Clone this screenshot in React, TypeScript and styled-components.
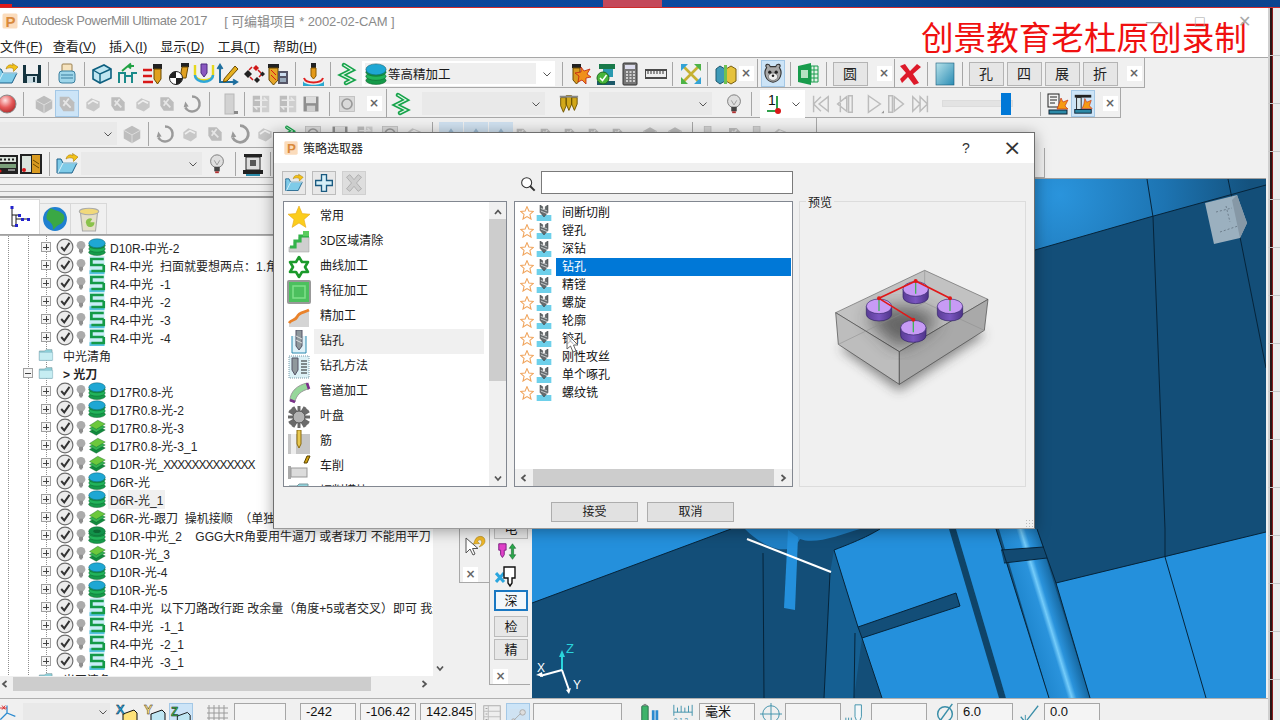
import React, { ReactNode } from 'react';
import styled, { createGlobalStyle } from 'styled-components';

const Global = createGlobalStyle`
  html, body { margin: 0; padding: 0; width: 1280px; height: 720px; overflow: hidden; background: #f0f0f0; }
  * { box-sizing: border-box; }
  body { font-family: "Liberation Sans", "Noto Sans CJK SC", sans-serif; font-size: 12px; color: #1a1a1a; }
  #root { width: 1280px; height: 720px; }
`;

/* ---------- icon drawings ---------- */
const gy = '#bdbdbd';
const gd = '#9a9a9a';
const paths: Record<string, ReactNode> = {
  folder: <><path d="M2 9V21H17L22 11H8L6 7H2Z" fill="#7fcbe8" stroke="#1c5f88" /><path d="M3 21L8 11H22" fill="none" stroke="#d8f2fb" /><path d="M11 7C12 3 15 2 18 3.5L17.5 1.5L23 5L18.5 9.5L18.3 6.5C16 5.5 13 5.5 11 7Z" fill="#f4c216" stroke="#a67c0c" strokeWidth=".6" /></>,
  save: <><rect x="3" y="3" width="18" height="18" fill="#15343f" /><rect x="6" y="3" width="12" height="9" fill="#f1f1f1" /><rect x="7" y="14" width="10" height="7" fill="#c9dbe2" /><rect x="13" y="15" width="2" height="5" fill="#15343f" /></>,
  printer: <><rect x="7" y="2" width="10" height="8" rx="1" fill="#f6e3be" stroke="#9a8050" /><rect x="4" y="9" width="16" height="12" rx="3" fill="#9fd6ea" stroke="#3a7f9f" /><path d="M6 13H18M6 16H18" stroke="#3a7f9f" /></>,
  box: <><path d="M3 8L14 3L21 7V16L10 21L3 17Z" fill="#bfe6f2" stroke="#0d5f7f" strokeWidth="1.6" /><path d="M3 8L10 12L21 7M10 12V21" fill="none" stroke="#0d5f7f" strokeWidth="1.4" /></>,
  fork: <><path d="M3 21V11H9V21M9 14H16V21M16 21V11H21" fill="none" stroke="#1a8a8a" strokeWidth="2" /><path d="M6 9L12 4H18M12 4L15 1.5M12 4L15 6.5" fill="none" stroke="#21a244" strokeWidth="2" /></>,
  endRed: <><rect x="12" y="2" width="9" height="5" fill="#222" /><path d="M13 7H20V17L16.5 22L13 17Z" fill="#e0a020" stroke="#6b4a00" /><path d="M2 8H11M2 14H11M2 20H12" stroke="#d81818" strokeWidth="2.4" /></>,
  ball: <><rect x="14" y="1" width="8" height="4" fill="#222" /><path d="M15 5H21L19 16H13Z" fill="#e0a020" stroke="#6b4a00" /><circle cx="9" cy="16" r="6.5" fill="#fff" stroke="#222" /><path d="M9 9.5A6.5 6.5 0 0 0 2.5 16H9ZM9 16V22.5A6.5 6.5 0 0 0 15.5 16Z" fill="#222" /></>,
  uTool: <><path d="M3 3V13C3 20 21 20 21 13V3" fill="none" stroke="#e6d81c" strokeWidth="2.4" /><path d="M3 13C3 22 21 22 21 13" fill="none" stroke="#2ea7d8" strokeWidth="2.4" /><path d="M9 2H15V11L12 15L9 11Z" fill="#8a58c0" stroke="#4c2a80" /></>,
  pencil: <><path d="M4 4V20H20" fill="none" stroke="#1e6e9e" strokeWidth="2" /><path d="M1.5 7L4 3L6.5 7M17 17.5L21 20L17 22.5" fill="none" stroke="#1e6e9e" strokeWidth="2" /><path d="M8 17L19 4L22 7L11 19L7.5 20Z" fill="#e6b020" stroke="#6b4a00" /></>,
  diamonds: <><path d="M3 12L7 8L11 12L7 16Z" fill="#222" /><path d="M12 6L15 3L18 6L15 9Z" fill="#d01818" /><path d="M13 18L16 15L19 18L16 21Z" fill="#222" /><path d="M8 8L11 5M9 15L12 18M17 8L20 11M18 15L21 12" stroke="#d01818" strokeWidth="1.5" /><path d="M19 12L21.5 9.5L24 12L21.5 14.5Z" fill="#222" /></>,
  calcTool: <><rect x="2" y="2" width="11" height="4" fill="#222" /><path d="M3 6H12V18L7.5 23L3 18Z" fill="#e6a628" stroke="#6b4a00" /><path d="M5 8L10 13M5 13L10 18" stroke="#d81818" /><rect x="12" y="9" width="10" height="13" fill="#556" /><rect x="14" y="11" width="6" height="3" fill="#cde" /><rect x="14" y="16" width="6" height="4" fill="#9ab" /></>,
  dish: <><rect x="10" y="1" width="5" height="5" fill="#222" /><path d="M10 6H15V14L12.5 17L10 14Z" fill="#e49a18" stroke="#8a5a00" /><path d="M3 16C5 22 20 22 22 16" fill="none" stroke="#e02020" strokeWidth="2" /><path d="M2 19C4 24 21 24 23 19V24H2Z" fill="#2aa8cf" /></>,
  zigzag: <><g fill="none" strokeLinecap="round"><path d="M9 3L17 8L7 13L17 18L11 21" stroke="#16a34a" strokeWidth="4.4" /><path d="M9 3L17 8L7 13L17 18L11 21" stroke="#e9f8ee" strokeWidth="1.1" /></g></>,
  stack: <><ellipse cx="12" cy="19" rx="11" ry="4.4" fill="#159a49" stroke="#0b5f2c" strokeWidth=".6" /><ellipse cx="12" cy="14.5" rx="11" ry="4.4" fill="#22b45a" stroke="#0b5f2c" strokeWidth=".6" /><ellipse cx="12" cy="10" rx="11" ry="4.4" fill="#159a49" stroke="#0b5f2c" strokeWidth=".6" /><ellipse cx="12" cy="7" rx="11" ry="6" fill="#1ea7d4" stroke="#0b5f6c" strokeWidth=".6" /></>,
  stackG: <><ellipse cx="12" cy="19" rx="11" ry="4.4" fill="#159a49" stroke="#0b5f2c" strokeWidth=".6" /><ellipse cx="12" cy="14.5" rx="11" ry="4.4" fill="#22b45a" stroke="#0b5f2c" strokeWidth=".6" /><ellipse cx="12" cy="10" rx="11" ry="4.4" fill="#159a49" stroke="#0b5f2c" strokeWidth=".6" /><ellipse cx="12" cy="7" rx="11" ry="6" fill="#12924a" stroke="#0b5f2c" strokeWidth=".6" /><ellipse cx="12" cy="7" rx="5" ry="2.4" fill="#0c6a34" /></>,
  zig: <><rect x="2" y="0" width="20" height="24" fill="#c9edf7" /><path d="M2 19H22V24H2Z" fill="#57c2e0" /><path d="M21 4H4.5V12H21M21 12V20H4.5" fill="none" stroke="#149a47" strokeWidth="3.6" /></>,
  layers: <><path d="M2 18L13 11L23 16L11 23Z" fill="#128a3e" stroke="#0a5a28" strokeWidth=".5" /><path d="M2 14L13 7L23 12L11 19Z" fill="#33b452" stroke="#0a5a28" strokeWidth=".5" /><path d="M2 10L13 3L23 8L11 15Z" fill="#6cc83c" stroke="#0a5a28" strokeWidth=".5" /></>,
  check: <><circle cx="12" cy="12" r="10.5" fill="#ececec" stroke="#6e6e6e" strokeWidth="1.6" /><path d="M7 12L11 16.5L18 6.5" fill="none" stroke="#333" strokeWidth="2.6" /></>,
  bulb: <><circle cx="12" cy="9" r="7.5" fill="#ababab" /><rect x="8.5" y="15" width="7" height="6" fill="#8f8f8f" /><rect x="10" y="21" width="4" height="2" fill="#777" /></>,
  bulbOn: <><circle cx="12" cy="9" r="7" fill="#dfdfdf" stroke="#777" /><path d="M9 8L12 13L15 8" fill="none" stroke="#999" /><rect x="9" y="15" width="6" height="5" fill="#444" /><rect x="10" y="20" width="4" height="2" fill="#b03030" /></>,
  folderT: <><path d="M2 6H10L12 4H21V20H2Z" fill="#8fd3dc" stroke="#7a9aa0" /><path d="M2 8H22V20H2Z" fill="#c6edf2" stroke="#7ab" strokeWidth=".6" /></>,
  ruler: <><rect x="1" y="7" width="22" height="10" fill="#4a4a4a" /><rect x="2" y="9" width="20" height="6" fill="#eee" /><path d="M4 9V12M7 9V12M10 9V12M13 9V12M16 9V12M19 9V12" stroke="#333" /></>,
  burst: <><rect x="3" y="2" width="9" height="4" fill="#222" /><path d="M4 6H11V18L7.5 22L4 18Z" fill="#d89a20" stroke="#6b4a00" /><path d="M12 5L15 9L21 7L18 12L22 15L17 16L17 22L13 18L9 20L10 14L6 11L12 10Z" fill="#f0901a" stroke="#c02010" strokeWidth=".8" /></>,
  checkTool: <><rect x="5" y="2" width="16" height="5" fill="#197a4a" /><rect x="9" y="7" width="10" height="8" fill="#2a9ab0" /><rect x="3" y="19" width="18" height="4" fill="#1d5a6a" /><circle cx="9" cy="16" r="6" fill="#47b53a" stroke="#206a20" /><path d="M6 16L8.5 18.5L12.5 13" fill="none" stroke="#fff" strokeWidth="1.5" /></>,
  calc: <><rect x="5" y="1" width="14" height="22" rx="1" fill="#777" stroke="#333" /><rect x="7" y="3" width="10" height="4" fill="#dde" /><path d="M8 10H10M11.5 10H13.5M15 10H17M8 13H10M11.5 13H13.5M15 13H17M8 16H10M11.5 16H13.5M15 16H17M8 19H10M11.5 19H13.5M15 19H17" stroke="#eee" strokeWidth="1.6" /></>,
  expand: <><path d="M4 4L20 20M20 4L4 20" stroke="#c6b132" strokeWidth="2.6" /><path d="M2 9V2H9L6 5ZM22 15V22H15L18 19Z" fill="#34a3d6" /><path d="M15 2H22V9L19 6ZM9 22H2V15L5 18Z" fill="#4db346" /></>,
  blocks: <><path d="M2 7L6 4L11 7V19L6 22L2 19Z" fill="#3f9ab8" stroke="#1e5a70" /><path d="M12 7L17 4L22 7V19L17 22L12 19Z" fill="#e6c23c" stroke="#7a6010" /><rect x="10" y="3" width="3" height="19" fill="#6fc254" /></>,
  bear: <><path d="M5 5C2 1 8 0 9 4H15C16 0 22 1 19 5C23 11 20 20 12 21C4 20 1 11 5 5Z" fill="#a8a8a8" stroke="#333" strokeWidth="1.2" /><ellipse cx="12" cy="15" rx="5" ry="4" fill="#eee" stroke="#555" strokeWidth=".6" /><circle cx="8.5" cy="10" r="1.8" fill="#222" /><circle cx="15.5" cy="10" r="1.8" fill="#222" /><circle cx="12" cy="14" r="1.4" fill="#222" /></>,
  greenDoc: <><path d="M2 4L15 1V23L2 20Z" fill="#189c4c" /><path d="M15 4H22V20H15Z" fill="#e3f3e8" stroke="#189c4c" /><path d="M15 8H22M15 12H22M15 16H22M18 4V20" stroke="#189c4c" /><rect x="5" y="8" width="7" height="8" fill="#b4e2c2" /></>,
  redX: <><path d="M2 4L7 2L12 9L19 2L23 5L15 12L21 21L16 23L10 15L4 21L2 17L8 11Z" fill="#dd1a2a" /></>,
  cyanSq: <><defs><linearGradient id="cg" x1="0" y1="0" x2="1" y2="1"><stop offset="0" stopColor="#b7e2ea" /><stop offset="1" stopColor="#2a8cb4" /></linearGradient></defs><rect x="3" y="1" width="18" height="22" fill="url(#cg)" stroke="#1a5a7a" strokeWidth=".6" /></>,
  ballRed: <><defs><radialGradient id="rb" cx=".4" cy=".3" r=".8"><stop offset="0" stopColor="#ffe2e2" /><stop offset=".5" stopColor="#e65a5a" /><stop offset="1" stopColor="#a32222" /></radialGradient></defs><circle cx="12" cy="12" r="9" fill="url(#rb)" stroke="#888" /></>,
  gCube: <><path d="M3 8L12 3L21 8V17L12 22L3 17Z" fill={gy} /><path d="M3 8L12 13L21 8M12 13V22" fill="none" stroke="#dedede" /></>,
  gCut: <><path d="M4 4H14L20 10V20H8L4 14Z" fill={gy} /><path d="M8 8L16 16M14 6L8 14" stroke="#e6e6e6" strokeWidth="2" /></>,
  gWave: <><path d="M4 10L10 5L20 9V16L13 21L4 17Z" fill="#c7c7c7" /><path d="M6 12L12 8L18 11" fill="none" stroke="#eee" strokeWidth="2" /></>,
  gLoop: <><path d="M12 3A9 9 0 1 1 4 16" fill="none" stroke={gd} strokeWidth="3" /><path d="M4 9L8 15L2 16Z" fill={gd} /></>,
  gBar: <><rect x="7" y="2" width="9" height="20" fill="#d2d2d2" stroke="#b8b8b8" /><rect x="16" y="19" width="4" height="3" fill="#888" /></>,
  gPair: <><rect x="3" y="3" width="8" height="18" fill={gy} /><rect x="13" y="3" width="8" height="18" fill="#cfcfcf" /><path d="M5 8H18L15 5M18 15H5L8 18" fill="none" stroke="#e9e9e9" strokeWidth="1.6" /></>,
  gSave: <><rect x="3" y="3" width="18" height="18" fill="#8f8f8f" /><rect x="6" y="3" width="12" height="8" fill="#ddd" /><rect x="7" y="14" width="10" height="7" fill="#cfcfcf" /></>,
  gCircle: <><rect x="3" y="3" width="18" height="18" fill="#d9d9d9" stroke="#bbb" /><circle cx="12" cy="12" r="6" fill="none" stroke="#999" strokeWidth="2" /></>,
  gold: <><path d="M4 5H10V14L7 21L4 14ZM10 3H16V12L13 19L10 12ZM16 5H22V12L19 19L16 12Z" fill="#d2a81a" stroke="#6b5200" /><rect x="3" y="3" width="20" height="2" fill="#888" /></>,
  axis: <><path d="M14 4V18" stroke="#2fa04a" strokeWidth="2" /><path d="M4 19H14" stroke="#2fa04a" strokeWidth="2" /><circle cx="15" cy="19" r="3" fill="#d81818" /><text x="5" y="13" fontSize="14" fill="#111" fontFamily="Liberation Sans">1</text></>,
  first: <><path d="M5 3V21M21 4L11 12L21 20ZM13 4L5 12L13 20" fill="none" stroke="#bcbcbc" strokeWidth="1.6" /></>,
  prev: <><path d="M8 3V21M21 3V21H17V3ZM15 4L5 12L15 20Z" fill="none" stroke="#bcbcbc" strokeWidth="1.6" /></>,
  play: <><path d="M7 3L20 12L7 21Z" fill="none" stroke="#bcbcbc" strokeWidth="1.6" /><path d="M21 22H24V19Z" fill="#999" /></>,
  next: <><path d="M3 3V21H7V3ZM9 4L19 12L9 20Z" fill="none" stroke="#bcbcbc" strokeWidth="1.6" /></>,
  last: <><path d="M3 4L11 12L3 20ZM11 4L19 12L11 20ZM19 3V21" fill="none" stroke="#bcbcbc" strokeWidth="1.6" /></>,
  machA: <><rect x="2" y="2" width="11" height="13" fill="#f3f3f3" stroke="#222" /><path d="M4 5H11M4 8H11M4 11H9" stroke="#222" /><rect x="3" y="18" width="18" height="4" fill="#2d8aa8" stroke="#123" /><path d="M15 6L17 10L22 8L19 14L22 17H11L13 12Z" fill="#f59a14" stroke="#c02010" strokeWidth=".6" /></>,
  machB: <><rect x="3" y="2" width="18" height="3" fill="#222" /><rect x="5" y="5" width="5" height="13" fill="#d8e8ee" stroke="#222" /><rect x="3" y="18" width="18" height="4" fill="#2d8aa8" stroke="#123" /><path d="M14 6L16 10L21 8L19 14L22 17H11L13 12Z" fill="#f59a14" stroke="#c02010" strokeWidth=".6" /></>,
  panelA: <><rect x="1" y="3" width="22" height="19" fill="#222" /><rect x="3" y="5" width="18" height="5" fill="#dbe4dc" /><path d="M5 7.5H7M9 7.5H11M13 7.5H15M17 7.5H19" stroke="#222" strokeWidth="2" /><rect x="3" y="12" width="18" height="4" fill="#7aa07a" /><circle cx="5" cy="19" r="1.6" fill="#d81818" /><path d="M13 18H20" stroke="#eee" /></>,
  panelB: <><rect x="1" y="2" width="22" height="20" fill="#222" /><rect x="3" y="4" width="9" height="16" fill="#dbe4dc" /><rect x="13" y="3" width="8" height="18" fill="#d89a20" /><path d="M14 8L20 12M14 12L20 16" stroke="#6b4a00" /><circle cx="5" cy="18" r="2" fill="#d81818" /></>,
  mach: <><rect x="3" y="2" width="18" height="3" fill="#222" /><rect x="5" y="5" width="14" height="13" fill="#dcdcdc" stroke="#222" /><rect x="9" y="8" width="6" height="6" fill="#555" /><rect x="2" y="18" width="20" height="4" fill="#222" /><rect x="5" y="22" width="14" height="2" fill="#2a8aa8" /></>,
  blueSel: <><rect x="0" y="0" width="24" height="24" fill="#cfe0ef" /><path d="M5 18L12 8L19 18" fill="none" stroke="#9ab8d0" strokeWidth="2" /></>,
  axX: <><path d="M8 11L19 7L22 10V21L11 23L8 20Z" fill="#ffe27a" stroke="#111" /><text x="1" y="11" fontSize="13" fontWeight="700" fill="#1a9ad6" stroke="#111" strokeWidth=".4" fontFamily="Liberation Sans">X</text></>,
  axY: <><path d="M8 11L19 7L22 10V21L11 23L8 20Z" fill="#bfe6f2" stroke="#111" /><text x="1" y="11" fontSize="13" fontWeight="700" fill="#ffe27a" stroke="#111" strokeWidth=".4" fontFamily="Liberation Sans">Y</text></>,
  axZ: <><path d="M8 11L19 7L22 10V21L11 23L8 20Z" fill="#bfe6f2" stroke="#111" /><text x="1" y="11" fontSize="13" fontWeight="700" fill="#39b54a" stroke="#111" strokeWidth=".4" fontFamily="Liberation Sans">Z</text></>,
  grid: <path d="M3 2V22M8 2V22M13 2V22M18 2V22M1 5H22M1 10H22M1 15H22M1 20H22" stroke="#9a9a9a" />,
  matrix: <><rect x="3" y="3" width="18" height="18" fill="#eee" stroke="#aaa" /><path d="M8 3V21M3 9H21M3 15H21" stroke="#bbb" /><path d="M5 6H7M5 12H7M5 18H7" stroke="#999" /></>,
  link: <><rect x="3" y="3" width="18" height="18" fill="#cfe2f2" /><circle cx="7" cy="16" r="2" fill="#ddd" stroke="#aaa" /><circle cx="17" cy="7" r="3" fill="#ddd" stroke="#aaa" /><path d="M8 15L15 8" stroke="#aaa" /></>,
  battery: <><rect x="3" y="3" width="7" height="19" rx="1" fill="#3db36a" stroke="#2a6a4a" /><rect x="5" y="1" width="3" height="2" fill="#888" /><path d="M14 8H17V22H14ZM18 8H21V22H18Z" fill="#2a8ad0" /></>,
  rulerB: <><path d="M2 2V14M22 2V14M2 10H22M6 5V10M10 3V10M14 5V10M18 3V10" fill="none" stroke="#3a8ea8" /><text x="2" y="22" fontSize="7" fill="#3a8ea8" fontFamily="Liberation Sans">0 1 2</text></>,
  cross: <><circle cx="12" cy="12" r="9" fill="none" stroke="#3a8ea8" /><path d="M12 0V24M0 12H24" stroke="#3a8ea8" /></>,
  toolB: <><path d="M12 2H19V15L17 20H14L12 15Z" fill="#f4f8fa" stroke="#3a8ea8" /><path d="M2 20V16M5 20V16M8 20V16M1 20H13" stroke="#3a8ea8" /></>,
  dia: <><circle cx="12" cy="12" r="8" fill="none" stroke="#3a8ea8" strokeWidth="1.6" /><path d="M4 23L20 1" stroke="#3a8ea8" strokeWidth="1.6" /></>,
  tickB: <><path d="M3 15L8 21L22 3" fill="none" stroke="#3a8ea8" strokeWidth="1.4" /><path d="M8 21V13" stroke="#3a8ea8" /></>,
  coord: <><path d="M12 12L4 20M12 12L22 16M12 12V3" stroke="#2a8ad0" strokeWidth="1.5" /><path d="M6 3L10 8M10 3L6 8M3 6H12" stroke="#d81818" /></>,
  bikeP: <><path d="M3 3H11V10H9V15L7 18L5 15V10H3Z" fill="#e040c8" stroke="#7a1a80" /><path d="M18 3L21.5 8H19.2V15H21.5L18 20L14.5 15H16.8V8H14.5Z" fill="#2aa84a" stroke="#145a2a" strokeWidth=".6" /></>,
  bikeX: <><path d="M1 9L9 18M9 9L1 18" stroke="#2ba6de" strokeWidth="3" /><path d="M9 3H20V14H17V19L15 22L13 19V14H9Z" fill="#fff" stroke="#111" strokeWidth="1.4" /></>,
  undoCur: <><path d="M3 5V20L7 16L10 22L12 21L9.5 15.5H15Z" fill="#fff" stroke="#555" /><path d="M12 7C14 2 22 2 22 8C22 11 19 13 16 14C18 12 19 10 18.6 8.5C18 6 15.5 6.5 14.6 8.5L16.5 10.5L10.5 11Z" fill="#f0b828" stroke="#a07a10" strokeWidth=".5" /></>,
  star: <><path d="M12 1L15.2 8.6L23 9.2L17 14.4L18.9 22.4L12 18L5.1 22.4L7 14.4L1 9.2L8.8 8.6Z" fill="#fff" stroke="#f0a45c" strokeWidth="1.8" /></>,
  starF: <><path d="M12 1L15.2 8.6L23 9.2L17 14.4L18.9 22.4L12 18L5.1 22.4L7 14.4L1 9.2L8.8 8.6Z" fill="#fbcd1d" stroke="#e8a817" strokeWidth=".6" /></>,
  endMill: <><path d="M1 15H23V24H1Z" fill="#6ed0ea" /><path d="M6 0V11L12 18L18 11V0L14 2.5V7H10V2.5Z" fill="#666c6e" stroke="#2a2e30" strokeWidth=".7" /><path d="M7 5L17 9M7 9L17 13" stroke="#d0d4d6" strokeWidth="1.3" /></>,
  steps: <><path d="M2 22V17H7V12H12V7H22V22Z" fill="#cfcfcf" stroke="#999" strokeWidth=".5" /><path d="M3 17H8V11H13V6H22" fill="none" stroke="#33b34a" strokeWidth="3.2" /><rect x="16" y="1" width="6" height="5" fill="#5bcc5f" /></>,
  flower: <><path d="M12 2L15 7L21 7L18 12L21 17L15 17L12 22L9 17L3 17L6 12L3 7L9 7Z" fill="#fff" stroke="#1b9a2b" strokeWidth="2.6" strokeLinejoin="round" /></>,
  greenSq: <><rect x="0" y="0" width="24" height="24" rx="2" fill="#999" /><rect x="2" y="2" width="20" height="20" fill="#4cc05e" /><rect x="6" y="6" width="12" height="12" fill="none" stroke="#7fe08a" strokeWidth="1.5" /></>,
  stairs: <><path d="M2 22V17L8 14L12 9L18 6H22V22Z" fill="#d4d4d4" /><path d="M2 18C5 14 8 16 10 12C12 7 16 8 22 5" fill="none" stroke="#e9822a" strokeWidth="2.8" /></>,
  drill: <><path d="M5 6V23H19V6" fill="#dff2f9" stroke="#2a8ab0" /><path d="M9 0H15V16L12 20L9 16Z" fill="#8f989c" stroke="#556" /><path d="M9 6L15 9M9 10L15 13" stroke="#ddd" /></>,
  drillL: <><rect x="2" y="1" width="20" height="22" fill="#dcf1f6" stroke="#7a9aa8" strokeDasharray="1 1" /><path d="M5 3H11V15L8 20L5 15Z" fill="#8f989c" stroke="#556" /><path d="M14 6H20M14 9H20M14 12H20M14 15H20M14 18H20" stroke="#222" /></>,
  pipe: <><path d="M3 21C3 11 11 5 20 3L22 9C15 10 9 15 8 22Z" fill="#96d79a" stroke="#9a9a9a" /><path d="M3 20L8 22" stroke="#7a2f8a" strokeWidth="2.6" /><path d="M20 3L22 9" stroke="#7a2f8a" strokeWidth="2.6" /></>,
  gear: <><g stroke="#6a6a6a" strokeWidth="3"><path d="M12 1V23M1 12H23M4 4L20 20M20 4L4 20M6 2L18 22M18 2L6 22M2 6L22 18M22 6L2 18" /></g><circle cx="12" cy="12" r="6" fill="#b3b3b3" stroke="#555" /></>,
  rib: <><rect x="1" y="4" width="22" height="20" fill="#c6c6c6" /><rect x="4" y="4" width="5" height="20" fill="#ededed" /><path d="M10 0H14V14L12 18L10 14Z" fill="#e8c850" stroke="#8a6a10" /></>,
  turn: <><rect x="1" y="11" width="3" height="13" fill="#aaa" /><rect x="4" y="13" width="16" height="9" fill="#dcdcdc" stroke="#999" /><path d="M17 8L20 1H23L20 8Z" fill="#d0a010" stroke="#5a4400" /></>,
  search: <><circle cx="10" cy="10" r="7.5" fill="#fff" stroke="#333" strokeWidth="1.6" /><path d="M15 15L22 22" stroke="#333" strokeWidth="3" /></>,
  plus: <><path d="M9 2H15V9H22V15H15V22H9V15H2V9H9Z" fill="#d7f0f8" stroke="#1a5a80" strokeWidth="1.6" /></>,
  cancel: <><path d="M3 5L7 2L12 8L17 2L21 5L15 12L21 19L17 22L12 16L7 22L3 19L9 12Z" fill="#cdcdcd" stroke="#aaa" /></>,
  logo: <><rect x="2" y="2" width="20" height="20" rx="2" fill="#fbdcbc" /><text x="6" y="20" fontSize="20" fontWeight="700" fill="#d98a3c" fontFamily="Liberation Sans">P</text></>,
  treeTab: <><path d="M4 2V21H9M4 10H11M8 10V19M8 14H14M14 14H20" fill="none" stroke="#1c1c1c" strokeWidth="1" /><rect x="2.5" y="1" width="3" height="3" fill="#2222cc" /><rect x="10" y="9" width="3" height="3" fill="#2222cc" /><rect x="13" y="13" width="3" height="3" fill="#2222cc" /><rect x="7" y="19" width="3" height="3" fill="#2222cc" /><rect x="19" y="13" width="3" height="3" fill="#2222cc" /></>,
  globe: <><circle cx="12" cy="12" r="11" fill="#1f7fd0" /><path d="M8 2C12 4 18 5 20 8C22 12 19 16 16 17C13 18 12 21 10 22C11 18 8 15 5 13C3 10 5 5 8 2Z" fill="#3aa845" /></>,
  bin: <><path d="M4 5H20L18 23H6Z" fill="#e5e0c8" stroke="#aaa" /><ellipse cx="12" cy="5" rx="9" ry="3" fill="#f1d97a" stroke="#aaa" /><path d="M9 15A4 4 0 0 1 15 12L13 15H17A4 4 0 0 1 10 18Z" fill="#8ac24a" /></>,
};

const IconSvg = styled.svg<{ $s: number }>`
  width: ${(p) => p.$s}px;
  height: ${(p) => p.$s}px;
  flex: none;
  display: block;
`;
const Ic = ({ n, s = 24 }: { n: string; s?: number }) => (
  <IconSvg $s={s} viewBox="0 0 24 24">{paths[n]}</IconSvg>
);

/* ---------- shell ---------- */
const Page = styled.div`
  width: 1280px;
  height: 720px;
  display: flex;
  flex-direction: column;
  position: relative;
  overflow: hidden;
`;
const TopStrip = styled.div`
  height: 8px;
  flex: none;
  border-bottom: 1px solid #d02a2a;
  background:
    linear-gradient(#e01818, #e01818) 0 4px / 12px 3px no-repeat,
    linear-gradient(#c4485a, #c4485a) 603px 0 / 59px 7px no-repeat,
    linear-gradient(90deg, #0a3f8f, #0b4aa0 60%, #0a3a80 80%, #0b4590);
`;
const Desk = styled.div`
  flex: 1;
  display: flex;
  min-height: 0;
`;
const Frame = styled.div`
  width: 1268px;
  flex: none;
  display: flex;
  flex-direction: column;
  background: #f0f0f0;
`;
const EdgeStrip = styled.div`
  flex: 1;
  background:
    repeating-linear-gradient(180deg, transparent 0 47px, #c8c8c8 47px 48px),
    linear-gradient(90deg, #cfcfcf 0 2px, #2a1414 2px 4px, #8a1c1c 4px 5px, #ececec 5px);
`;
const TitleBar = styled.div`
  height: 25px;
  flex: none;
  background: #fff;
  display: flex;
  align-items: center;
  padding-left: 1px;
  gap: 3px;
`;
const TitleMain = styled.span`
  font-size: 13px;
  color: #8a8a8a;
  white-space: pre;
  letter-spacing: -0.4px;
`;
const TitleProject = styled(TitleMain)`
  margin-left: 14px;
  letter-spacing: -0.1px;
`;
const Watermark = styled.div`
  position: absolute;
  left: 921px;
  top: 16px;
  font-family: "Noto Sans CJK SC", serif;
  font-size: 32.6px;
  line-height: 40px;
  color: #f01010;
  white-space: nowrap;
  font-weight: 400;
`;
const WinControls = styled.div`
  position: absolute;
  left: 1146px;
  top: 14px;
  display: flex;
  gap: 33px;
  color: #a8a8a8;
  font-size: 16px;
  line-height: 16px;
`;
const MenuBar = styled.div`
  height: 25px;
  flex: none;
  background: #fff;
  display: flex;
  align-items: center;
  gap: 13px;
  border-bottom: 1px solid #a8a8a8;
`;
const MenuItem = styled.span`
  font-size: 13px;
  color: #222;
  white-space: pre;
  & u { text-decoration: underline; }
  &:first-child { margin-right: -3px; }
`;

/* ---------- toolbars ---------- */
const Band = styled.div`
  height: 30px;
  flex: none;
  background: #f0f0f0;
  overflow: hidden;
`;
const Bar = styled.div<{ $w: number }>`
  width: ${(p) => p.$w}px;
  height: 30px;
  padding-top: 2px;
  display: flex;
  align-items: center;
  border-right: 1px solid #a8a8a8;
  border-bottom: 1px solid #a8a8a8;
`;
const Cell = styled.div<{ $ml: number; $w: number }>`
  margin-left: ${(p) => p.$ml}px;
  width: ${(p) => p.$w}px;
  flex: none;
  display: flex;
  align-items: center;
  justify-content: center;
`;
const SelBox = styled.div`
  width: 24px;
  height: 27px;
  background: #cce4f7;
  border: 1px solid #a4c8e6;
  display: flex;
  align-items: center;
  justify-content: center;
`;
const VSep = styled.div`
  width: 1px;
  height: 24px;
  background: #a6a6a6;
`;
const TallSep = styled(VSep)`
  height: 30px;
`;
const CloseBox = styled.div`
  width: 15px;
  height: 15px;
  background: #fff;
  color: #666;
  font: 700 12px/15px "DejaVu Sans", sans-serif;
  text-align: center;
`;
const TextBtn = styled.div`
  width: 100%;
  height: 24px;
  border: 1px solid #b4b4b4;
  background: #e6e6e6;
  font-size: 14px;
  line-height: 22px;
  text-align: center;
  color: #222;
`;
const ComboBox = styled.div`
  width: 100%;
  height: 23px;
  background: #e9e9e9;
  display: flex;
  align-items: center;
  justify-content: flex-end;
  padding-right: 4px;
`;
const ComboWide = styled.div`
  width: 100%;
  height: 25px;
  background: #fff;
  display: flex;
  align-items: center;
  padding-left: 3px;
  padding-right: 3px;
`;
const ComboInner = styled.div`
  flex: 1;
  height: 21px;
  background: #efefef;
  display: flex;
  align-items: center;
  gap: 1px;
  font-size: 12.5px;
`;
const Chevron = () => (
  <IconSvg $s={10} viewBox="0 0 10 10"><path d="M1.5 3.5L5 7L8.5 3.5" fill="none" stroke="#555" strokeWidth="1" /></IconSvg>
);
const AxisBox = styled.div`
  width: 100%;
  height: 28px;
  background: #fff;
  display: flex;
  align-items: center;
  padding-left: 3px;
  gap: 4px;
`;
const SliderTrack = styled.div`
  width: 100%;
  height: 7px;
  background: #e3e3e3;
  border: 1px solid #dcdcdc;
  display: flex;
  justify-content: flex-end;
  align-items: center;
  padding-right: 1px;
`;
const SliderThumb = styled.div`
  width: 10px;
  height: 22px;
  background: #0078d7;
  flex: none;
`;

type It = [number, number, ReactNode];
const ic = (x: number, n: string, s = 24): It => [x, s, <Ic n={n} s={s} />];
const sel = (x: number, n: string, s = 22): It => [x, 24, <SelBox><Ic n={n} s={s} /></SelBox>];
const sep = (x: number): It => [x, 1, <VSep />];
const div = (x: number): It => [x, 1, <TallSep />];
const cl = (x: number): It => [x, 15, <CloseBox>×</CloseBox>];
const tb = (x: number, t: string, w = 35): It => [x, w, <TextBtn>{t}</TextBtn>];
const combo = (a: number, b: number): It => [(a + b) / 2, b - a, <ComboBox><Chevron /></ComboBox>];

const flow = (items: It[]) => {
  let right = 0;
  return items.map(([x, w, node], i) => {
    const left = x - w / 2;
    const ml = left - right;
    right = left + w;
    return <Cell key={i} $ml={ml} $w={w}>{node}</Cell>;
  });
};

const row1: It[] = [
  ic(7, 'folder'), ic(32, 'save'), sep(48), ic(67, 'printer'), sep(84), ic(102, 'box'), ic(128, 'fork'), ic(153, 'endRed'), ic(179, 'ball'), ic(204, 'uTool'), ic(228, 'pencil'), ic(253, 'diamonds'), ic(278, 'calcTool'), sep(295), ic(313, 'dish'), sep(330), ic(347, 'zigzag'),
  [458.5, 193, <ComboWide><ComboInner><Ic n="stack" s={22} />等高精加工</ComboInner><Cell $ml={6} $w={10}><Chevron /></Cell></ComboWide>],
  sep(562), ic(581, 'burst'), ic(606, 'checkTool'), ic(630, 'calc'), ic(656, 'ruler'), sep(672), ic(691, 'expand'), sep(707), ic(726, 'blocks'), cl(746), div(757), sel(773, 'bear'), sep(790), ic(808, 'greenDoc'), sep(826), tb(850, '圆'), cl(884), div(894), ic(910, 'redX'), sep(927), ic(945, 'cyanSq'), sep(962), tb(986, '孔'), tb(1024, '四'), tb(1062, '展'), tb(1100, '折'), cl(1134),
];
const row2: It[] = [
  ic(7, 'ballRed'), sep(23), ic(44, 'gCube', 22), sel(67, 'gCut'), ic(93, 'gWave', 20), ic(118, 'gCut', 20), ic(143, 'gWave', 20), ic(167, 'gCut', 20), ic(192, 'gLoop', 20), sep(209), ic(230, 'gBar'), sep(244), ic(261, 'gPair', 22), ic(288, 'gPair', 22), ic(311, 'gSave', 20), sep(329), ic(347, 'gCircle', 20), cl(374), div(386), ic(401, 'zigzag'), combo(422, 545), ic(568, 'gold', 22), combo(589, 712), ic(734, 'bulbOn', 22), sep(751),
  [782.5, 45, <AxisBox><Ic n="axis" s={24} /><Chevron /></AxisBox>],
  ic(820, 'first', 22), ic(844, 'prev', 22), ic(873, 'play', 22), ic(897, 'next', 22), ic(921, 'last', 22),
  [977.5, 71, <SliderTrack><SliderThumb /></SliderTrack>],
  sep(1040), ic(1058, 'machA'), sel(1083, 'machB'), cl(1110),
];
const row3: It[] = [
  combo(0, 117), ic(132, 'gCube', 22), sep(148), ic(165, 'gLoop', 20), ic(190, 'gWave', 20), ic(215, 'gCut', 20), ic(240, 'gLoop', 22), ic(265, 'gWave', 20), ic(289, 'zigzag', 18), ic(313, 'gCircle', 20), ic(340, 'gSave', 20), ic(365, 'gPair', 20), ic(390, 'gCircle', 20), ic(414, 'gWave', 20), sep(432), ic(451, 'blueSel'), ic(476, 'blueSel'), ic(501, 'blueSel'), ic(522, 'gCut', 16), ic(546, 'gCut', 16), ic(570, 'gCut', 16), ic(594, 'gCut', 16), ic(618, 'gCut', 16), ic(650, 'gCube', 18), ic(675, 'gCube', 18), sep(692), ic(708, 'gBar', 18), ic(735, 'gCut', 18), ic(757, 'gBar', 18), ic(780, 'gWave', 18),
];
const row4: It[] = [
  ic(7, 'panelA'), ic(31, 'panelB'), sep(49), ic(67, 'folder'), combo(81, 202), ic(217, 'bulbOn', 22), sep(235), ic(253, 'mach'), sep(270),
];

/* ---------- work area ---------- */
const Work = styled.div`
  flex: 1;
  min-height: 0;
  display: flex;
`;
const LeftColumn = styled.div`
  width: 532px;
  flex: none;
  display: flex;
  flex-direction: column;
`;
const DockLines = styled.div`
  height: 20px;
  flex: none;
  border-bottom: 2px solid #9c9c9c;
  background: linear-gradient(#f0f0f0 0 6px, #b0b0b0 6px 7px, #f0f0f0 7px 13px, #b0b0b0 13px 14px, #f0f0f0 14px);
`;
const DockBody = styled.div`
  flex: 1;
  min-height: 0;
  display: flex;
`;
const TreePane = styled.div`
  width: 447px;
  flex: none;
  display: flex;
  flex-direction: column;
`;
const TabsRow = styled.div`
  height: 37px;
  flex: none;
  display: flex;
  align-items: flex-end;
  border-bottom: 1px solid #a0a0a0;
`;
const Tab = styled.div<{ $on?: boolean; $w: number }>`
  width: ${(p) => p.$w}px;
  height: ${(p) => (p.$on ? 35 : 31)}px;
  background: ${(p) => (p.$on ? '#fff' : '#f0f0f0')};
  border-right: 1px solid #d8d8d8;
  border-top: 1px solid #d8d8d8;
  display: flex;
  align-items: center;
  justify-content: center;
`;
const TreeRow2 = styled.div`
  height: 441px;
  flex: none;
  display: flex;
  border-top: 1px solid #b0b0b0;
`;
const Tree = styled.div`
  width: 433px;
  flex: none;
  overflow: hidden;
  padding-top: 2px;
  background:
    repeating-linear-gradient(180deg, #8e8e8e 0 1px, transparent 1px 2px) 8px 0 / 1px 100% no-repeat,
    repeating-linear-gradient(180deg, #8e8e8e 0 1px, transparent 1px 2px) 28px 0 / 1px 100% no-repeat,
    repeating-linear-gradient(180deg, #8e8e8e 0 1px, transparent 1px 2px) 46px 0 / 1px 100% no-repeat,
    #fff;
`;
const Row = styled.div<{ $pad: number }>`
  height: 18px;
  display: flex;
  align-items: center;
  padding-left: ${(p) => p.$pad}px;
  white-space: pre;
  color: #262626;
  font-size: 12px;
`;
const Expander = styled.span<{ $open?: boolean }>`
  width: 10px;
  height: 10px;
  flex: none;
  background:
    linear-gradient(#444, #444) center / 6px 1px no-repeat,
    ${(p) => (p.$open ? '' : 'linear-gradient(#444, #444) center / 1px 6px no-repeat,')}
    #f5f5f5;
  border: 1px solid #a0a0a0;
`;
const Check = styled.span`
  margin-left: 5px;
  display: flex;
`;
const PlainSlot = styled.span`
  display: flex;
`;
const RowText = styled.span<{ $hl?: boolean }>`
  margin-left: 2px;
  padding: 1px 2px;
  background: ${(p) => (p.$hl ? '#f0f0f0' : 'transparent')};
`;
const NarrowTail = styled.span`
  letter-spacing: -1px;
`;
const FolderName = styled.span<{ $bold?: boolean }>`
  margin-left: 9px;
  font-weight: ${(p) => (p.$bold ? 700 : 400)};
`;
const VScroll = styled.div`
  width: 14px;
  flex: none;
  background: #f0f0f0;
  display: flex;
  flex-direction: column;
  justify-content: flex-end;
  align-items: center;
  padding-bottom: 3px;
`;
const HScroll = styled.div`
  height: 15px;
  flex: none;
  width: 433px;
  background: #f0f0f0;
  display: flex;
  align-items: center;
  padding-right: 4px;
  gap: 3px;
`;
const HThumb = styled.div<{ $w: number }>`
  width: ${(p) => p.$w}px;
  height: 14px;
  background: #cdcdcd;
  flex: none;
`;
const HFill = styled.div`
  flex: 1;
`;
const Arrow = ({ d }: { d: 'u' | 'd' | 'l' | 'r' }) => {
  const p = { u: 'M2 7L5 3.5L8 7', d: 'M2 3.5L5 7L8 3.5', l: 'M6.5 2L3 5L6.5 8', r: 'M3.5 2L7 5L3.5 8' }[d];
  return <IconSvg $s={10} viewBox="0 0 10 10"><path d={p} fill="none" stroke="#555" strokeWidth="1.7" /></IconSvg>;
};
const Strip = styled.div<{ $h: number; $w: number }>`
  width: ${(p) => p.$w}px;
  height: ${(p) => p.$h}px;
  flex: none;
  border-left: 1px solid #a8a8a8;
  border-bottom: 1px solid #a8a8a8;
  display: flex;
  flex-direction: column;
  justify-content: flex-end;
  align-items: center;
`;
const StripGap = styled.div<{ $w: number }>`
  width: ${(p) => p.$w}px;
  flex: none;
`;
const SideBtn = styled.div<{ $on?: boolean; $mt: number }>`
  width: 34px;
  height: 21px;
  margin-top: ${(p) => p.$mt}px;
  margin-left: 2px;
  flex: none;
  border: ${(p) => (p.$on ? '2px solid #1a78c2' : '1px solid #bcbcbc')};
  background: ${(p) => (p.$on ? '#f2f7fb' : '#e7e7e7')};
  font-size: 13px;
  line-height: ${(p) => (p.$on ? 17 : 19)}px;
  text-align: center;
`;
const StripIcon = styled.div<{ $mt: number; $ml: number }>`
  margin-top: ${(p) => p.$mt}px;
  margin-left: ${(p) => p.$ml}px;
  display: flex;
`;
const StripClose = styled.div<{ $mt: number; $mr: number }>`
  margin-top: ${(p) => p.$mt}px;
  margin-right: ${(p) => p.$mr}px;
`;

const ViewWrap = styled.div`
  width: 734px;
  flex: none;
  display: flex;
  border-top: 1px solid #a0a0a0;
`;
const ViewSvg = styled.svg`
  display: block;
  width: 734px;
  height: 519px;
`;

/* ---------- status bar ---------- */
const StatusBar = styled.div`
  height: 22px;
  flex: none;
  display: flex;
  align-items: flex-start;
  padding-top: 4px;
  border-top: 1px solid #b0b0b0;
  overflow: hidden;
`;
const StatusField = styled.div`
  width: 100%;
  height: 20px;
  border: 1px solid #a6a6a6;
  background: #f4f4f4;
  font-size: 13px;
  line-height: 16px;
  padding-left: 5px;
  color: #111;
  white-space: nowrap;
`;
const StatusCombo = styled.div`
  width: 100%;
  height: 18px;
  background: #e9e9e9;
  display: flex;
  align-items: center;
  justify-content: flex-end;
  padding-right: 2px;
`;

/* ---------- dialog ---------- */
const Dialog = styled.div`
  position: absolute;
  left: 273px;
  top: 132px;
  width: 762px;
  height: 397px;
  background: #f0f0f0;
  border: 1px solid #6f6f6f;
  border-bottom-color: #9a9a9a;
  box-shadow: 0 2px 14px rgba(0, 0, 0, 0.35);
  display: flex;
  flex-direction: column;
`;
const DlgTitle = styled.div`
  height: 30px;
  flex: none;
  background: #fff;
  display: flex;
  align-items: center;
  padding-left: 9px;
  padding-bottom: 1px;
  gap: 4px;
  font-size: 12px;
`;
const DlgTitleFill = styled.span`
  flex: 1;
`;
const DlgHelp = styled.span`
  font-size: 14px;
  color: #333;
  width: 37px;
`;
const DlgClose = styled.span`
  font-size: 22px;
  line-height: 22px;
  color: #333;
  width: 31px;
  font-family: "DejaVu Sans", sans-serif;
`;
const DlgBody = styled.div`
  flex: 1;
  padding: 8px 8px 0 9px;
  display: grid;
  grid-template-columns: 224px 279px 227px;
  grid-template-rows: 24px 286px auto;
  column-gap: 7px;
  row-gap: 6px;
`;
const DlgTools = styled.div`
  display: flex;
  gap: 6px;
  margin-left: -1px;
`;
const ToolBtn = styled.div<{ $off?: boolean }>`
  width: 24px;
  height: 24px;
  background: ${(p) => (p.$off ? '#dedede' : '#e8e8e8')};
  border: 1px solid ${(p) => (p.$off ? '#d0d0d0' : '#bcbcbc')};
  display: flex;
  align-items: center;
  justify-content: center;
`;
const SearchRow = styled.div`
  display: flex;
  align-items: flex-start;
  gap: 5px;
  padding-left: 6px;
`;
const SearchIconSlot = styled.div`
  padding-top: 5px;
`;
const SearchInput = styled.div`
  flex: 1;
  height: 23px;
  background: #fff;
  border: 1px solid #7a7a7a;
`;
const ListBox = styled.div`
  background: #fff;
  border: 1px solid #828790;
  display: flex;
  overflow: hidden;
  min-height: 0;
`;
const CatItems = styled.div`
  flex: 1;
  padding-top: 2px;
  overflow: hidden;
`;
const CatItem = styled.div`
  height: 25px;
  display: flex;
  align-items: center;
`;
const CatIcon = styled.div`
  width: 30px;
  padding-left: 3px;
  flex: none;
  display: flex;
`;
const CatLabel = styled.div<{ $on?: boolean }>`
  flex: 1;
  height: 25px;
  line-height: 25px;
  margin-right: 5px;
  padding-left: 6px;
  font-size: 12px;
  background: ${(p) => (p.$on ? '#f0f0f0' : 'transparent')};
`;
const VBar = styled.div`
  width: 17px;
  flex: none;
  background: #f0f0f0;
  display: flex;
  flex-direction: column;
  align-items: center;
  padding-top: 5px;
`;
const VThumb = styled.div`
  width: 100%;
  height: 162px;
  margin-top: 2px;
  background: #cdcdcd;
  flex: none;
`;
const VBarFill = styled.div`
  flex: 1;
`;
const VBarEnd = styled.div`
  padding-bottom: 3px;
`;
const MidList = styled(ListBox)`
  flex-direction: column;
`;
const MidItems = styled.div`
  flex: 1;
  padding-top: 2px;
`;
const MidItem = styled.div`
  height: 18px;
  display: flex;
  align-items: center;
  padding-left: 5px;
`;
const StarSlot = styled.span`
  display: flex;
  margin-right: 2px;
`;
const MidLabel = styled.span<{ $on?: boolean }>`
  flex: 1;
  margin-left: 4px;
  margin-right: 1px;
  height: 18px;
  line-height: 18px;
  padding-left: 6px;
  font-size: 12px;
  background: ${(p) => (p.$on ? '#0078d7' : 'transparent')};
  color: ${(p) => (p.$on ? '#fff' : '#111')};
`;
const HBar = styled.div`
  height: 17px;
  flex: none;
  background: #f0f0f0;
  display: flex;
  align-items: center;
  padding: 0 4px;
  gap: 4px;
`;
const HBarThumb = styled.div`
  flex: 1;
  height: 17px;
  background: #cdcdcd;
`;
const PreviewBox = styled.div`
  border: 1px solid #dcdcdc;
  position: relative;
  margin-left: -1px;
  margin-right: 1px;
`;
const PreviewLabel = styled.span`
  position: absolute;
  left: 6px;
  top: -6px;
  padding: 0 2px;
  background: #f0f0f0;
  font-size: 12px;
  line-height: 14px;
`;
const PreviewSvg = styled.svg`
  display: block;
  width: 226px;
  height: 209px;
`;
const DlgFooter = styled.div`
  grid-column: 1 / 4;
  display: flex;
  gap: 9px;
  padding-left: 268px;
  padding-top: 9px;
`;
const PushBtn = styled.div`
  width: 87px;
  height: 20px;
  background: #e1e1e1;
  border: 1px solid #adadad;
  text-align: center;
  line-height: 18px;
  font-size: 12px;
`;
const Grip = styled.div`
  position: absolute;
  right: 1px;
  bottom: 1px;
  width: 8px;
  height: 8px;
  background:
    radial-gradient(circle, #bbb 0 1px, transparent 1px) 0 0 / 3px 3px;
`;
const Cursor = styled.svg`
  position: absolute;
  left: 566px;
  top: 333px;
  width: 13px;
  height: 20px;
`;

/* ---------- data ---------- */
type T = { t: string; i: string; hl?: boolean; tail?: string };
const treeA: T[] = [
  { t: 'D10R-中光-2', i: 'stack' },
  { t: 'R4-中光  扫面就要想两点：1.角度2.行距要合适', i: 'zig' },
  { t: 'R4-中光  -1', i: 'zig' },
  { t: 'R4-中光  -2', i: 'zig' },
  { t: 'R4-中光  -3', i: 'zig' },
  { t: 'R4-中光  -4', i: 'zig' },
];
const treeB: T[] = [
  { t: 'D17R0.8-光', i: 'stack' },
  { t: 'D17R0.8-光-2', i: 'stack' },
  { t: 'D17R0.8-光-3', i: 'layers' },
  { t: 'D17R0.8-光-3_1', i: 'layers' },
  { t: 'D10R-光_', tail: 'XXXXXXXXXXXXX', i: 'layers' },
  { t: 'D6R-光', i: 'stack' },
  { t: 'D6R-光_1', i: 'stack', hl: true },
  { t: 'D6R-光-跟刀  操机接顺  （单独', i: 'layers' },
  { t: 'D10R-中光_2    GGG大R角要用牛逼刀 或者球刀 不能用平刀', i: 'stackG' },
  { t: 'D10R-光_3', i: 'layers' },
  { t: 'D10R-光-4', i: 'stack' },
  { t: 'D10R-光-5', i: 'stack' },
  { t: 'R4-中光  以下刀路改行距 改余量（角度+5或者交叉）即可 我这里用的是', i: 'zig' },
  { t: 'R4-中光  -1_1', i: 'zig' },
  { t: 'R4-中光  -2_1', i: 'zig' },
  { t: 'R4-中光  -3_1', i: 'zig' },
];
const cats: [string, string][] = [
  ['starF', '常用'], ['steps', '3D区域清除'], ['flower', '曲线加工'], ['greenSq', '特征加工'], ['stairs', '精加工'], ['drill', '钻孔'], ['drillL', '钻孔方法'], ['pipe', '管道加工'], ['gear', '叶盘'], ['rib', '筋'], ['turn', '车削'], ['folderT', '切削模块'],
];
const mids = ['间断切削', '镗孔', '深钻', '钻孔', '精镗', '螺旋', '轮廓', '铰孔', '刚性攻丝', '单个啄孔', '螺纹铣'];

const ItemRow = ({ t, i, hl, tail }: T) => (
  <Row $pad={41}>
    <Expander />
    <Check><Ic n="check" s={18} /></Check>
    <PlainSlot><Ic n="bulb" s={14} /></PlainSlot>
    <PlainSlot><Ic n={i} s={18} /></PlainSlot>
    <RowText $hl={hl}>{t}{tail && <NarrowTail>{tail}</NarrowTail>}</RowText>
  </Row>
);

const Preview = () => (
  <PreviewSvg viewBox="3 33 678 627">
    <defs>
      <filter id="sh" x="-30%" y="-30%" width="160%" height="160%"><feGaussianBlur stdDeviation="18" /></filter>
      <filter id="sh2" x="-30%" y="-30%" width="160%" height="160%"><feGaussianBlur stdDeviation="26" /></filter>
      <linearGradient id="cyl" x1="0" x2="1"><stop offset="0" stopColor="#5a3d96" /><stop offset=".5" stopColor="#7a55c0" /><stop offset="1" stopColor="#4e3488" /></linearGradient>
    </defs>
    <path d="M120 470L300 600L560 430L420 370Z" fill="#333" opacity=".55" filter="url(#sh)" />
    <path d="M110 365L377 238L567 325L301 482Z" fill="#c2c2c2" stroke="#666" strokeWidth="2" />
    <path d="M110 365L301 482L301 580L118 460Z" fill="#bdbdbd" stroke="#444" strokeWidth="2" />
    <path d="M301 482L567 325L556 418L301 580Z" fill="#a9a9a9" stroke="#444" strokeWidth="2" />
    <path d="M200 380C260 340 370 330 420 390C370 440 320 470 290 470Z" fill="#333" opacity=".65" filter="url(#sh2)" />
    <path d="M118 460L377 335L556 418M377 238V335" fill="none" stroke="#8a8a8a" strokeWidth="1.5" />
    {[[240, 346], [350, 294], [453, 346], [343, 410]].map(([x, y], i) => (
      <g key={i}>
        <path d={`M${x - 38} ${y}V${y + 24}A38 20 0 0 0 ${x + 38} ${y + 24}V${y}Z`} fill="url(#cyl)" stroke="#2f1f66" strokeWidth="2" />
        <ellipse cx={x} cy={y} rx="38" ry="22" fill="#c79bf5" stroke="#3a2a70" strokeWidth="2" />
        <path d={`M${x} ${y - 24}V${y + 14}`} stroke="#3fb45a" strokeWidth="4" />
        <circle cx={x} cy={y - 24} r="6" fill="#e01818" />
      </g>
    ))}
    <path d="M240 322L350 270L453 322M240 322L343 386" fill="none" stroke="#e01818" strokeWidth="5" />
  </PreviewSvg>
);

const Viewport = () => (
  <ViewSvg viewBox="532 179 734 519">
    <defs>
      <radialGradient id="sky" gradientUnits="userSpaceOnUse" cx="1060" cy="195" r="190">
        <stop offset="0" stopColor="#2a94dc" />
        <stop offset=".55" stopColor="#1d74b2" />
        <stop offset="1" stopColor="#14527e" />
      </radialGradient>
      <linearGradient id="tube" gradientUnits="userSpaceOnUse" x1="1024" y1="613" x2="1060" y2="602">
        <stop offset="0" stopColor="#2088d0" />
        <stop offset=".45" stopColor="#2a93dc" />
        <stop offset=".56" stopColor="#74ccfa" />
        <stop offset=".68" stopColor="#2a93dc" />
        <stop offset="1" stopColor="#176aa4" />
      </linearGradient>
    </defs>
    <rect x="532" y="179" width="734" height="519" fill="#134e78" />
    <path d="M1035 179H1266V185L1150 217L1035 250Z" fill="url(#sky)" />
    <path d="M532 529H731L532 603Z" fill="#2490dc" />
    <path d="M830 573L834 550L858 627L862 638L854 698H824Z" fill="#155f92" />
    <path d="M834 550C860 540 870 535 880 529H951L1006 698H882L862 638L960 606L956 593L858 627Z" fill="#2490dc" />
    <path d="M949 529H956L1006 698H999Z" fill="#0f4468" />
    <path d="M956 529H996L1049 698H1006Z" fill="#2490dc" />
    <path d="M999 529H1037L1090 698H1049Z" fill="url(#tube)" />
    <path d="M1001 550L1044 547L1047 558L1004 563Z" fill="#124a72" />
    <path d="M1037 529L1056 583L1164 557L1267 532V529Z" fill="#134e78" />
    <path d="M1056 583L1090 698H1266V532L1164 557Z" fill="#2490dc" />
    <path d="M745 529C760 545 790 560 800 539C815 545 840 535 860 529Z" fill="#1f7fc4" />
    <path d="M788 530L784 608L795 610L798 537Z" fill="#2490dc" />
    <g fill="none" stroke="#06243a" strokeWidth="1">
      <path d="M1035 250L1150 217L1266 185" />
      <path d="M1147 179L1153 217L1165 529" />
      <path d="M1228 179L1240 237L1266 368" />
      <path d="M1165 529V557L1206 698" />
      <path d="M532 603L731 529" />
      <path d="M763 553L764 698M830 573L824 698M855 633L854 698" />
      <path d="M834 550L858 627L862 638L882 698" />
      <path d="M858 627L956 593L960 606L862 638" />
      <path d="M996 529L1049 698M1037 529L1056 583L1090 698" />
      <path d="M1056 583L1266 532" />
      <path d="M1001 550L1044 547M1004 563L1047 558" />
      <path d="M834 550C860 540 870 535 880 529" />
    </g>
    <path d="M747 539L831 572" stroke="#fff" strokeWidth="2" />
    <path d="M1205 203L1237 195L1247 223L1240 238L1214 244Z" fill="#9bb0bf" />
    <path d="M1237 195L1247 223L1240 238L1232 200Z" fill="#8698a6" />
    <path d="M1216 212L1232 208M1226 206L1230 222M1220 232L1238 226" stroke="#6e7e8c" strokeWidth="1" strokeDasharray="2 2" fill="none" />
    <g>
      <path d="M562 670V655" stroke="#2ad4dc" strokeWidth="2" />
      <path d="M562 650L565 657H559Z" fill="#2ad4dc" />
      <path d="M562 670L540 676" stroke="#fff" strokeWidth="2" />
      <path d="M562 670L569 690" stroke="#fff" strokeWidth="2" />
      <path d="M536 675L542 672L543 677Z M566 690L571 688L569 694Z" fill="#fff" />
      <text x="566" y="653" fontSize="13" fill="#2ad4dc" fontFamily="Liberation Sans">Z</text>
      <text x="537" y="672" fontSize="12" fill="#fff" fontFamily="Liberation Sans">X</text>
      <text x="573" y="689" fontSize="12" fill="#fff" fontFamily="Liberation Sans">Y</text>
    </g>
  </ViewSvg>
);

export default function App() {
  return (
    <>
      <Global />
      <Page>
        <TopStrip />
        <Desk>
          <Frame>
            <TitleBar>
              <Ic n="logo" s={18} />
              <TitleMain>Autodesk PowerMill Ultimate 2017</TitleMain>
              <TitleProject>[ 可编辑项目 * 2002-02-CAM ]</TitleProject>
            </TitleBar>
            <MenuBar>
              <MenuItem>文件(<u>F</u>)</MenuItem>
              <MenuItem>查看(<u>V</u>)</MenuItem>
              <MenuItem>插入(<u>I</u>)</MenuItem>
              <MenuItem>显示(<u>D</u>)</MenuItem>
              <MenuItem>工具(<u>T</u>)</MenuItem>
              <MenuItem>帮助(<u>H</u>)</MenuItem>
            </MenuBar>
            <Band><Bar $w={1145}>{flow(row1)}</Bar></Band>
            <Band><Bar $w={1121}>{flow(row2)}</Bar></Band>
            <Band><Bar $w={817}>{flow(row3)}</Bar></Band>
            <Band><Bar $w={1045}>{flow(row4)}</Bar></Band>
            <Work>
              <LeftColumn>
                <DockLines />
                <DockBody>
                  <TreePane>
                    <TabsRow>
                      <Tab $on $w={40}><Ic n="treeTab" s={24} /></Tab>
                      <Tab $w={31}><Ic n="globe" s={26} /></Tab>
                      <Tab $w={36}><Ic n="bin" s={26} /></Tab>
                    </TabsRow>
                    <TreeRow2>
                      <Tree>
                        {treeA.map((r, i) => <ItemRow key={i} {...r} />)}
                        <Row $pad={38}><Ic n="folderT" s={16} /><FolderName>中光清角</FolderName></Row>
                        <Row $pad={23}>
                          <Expander $open />
                          <Cell $ml={5} $w={16}><Ic n="folderT" s={16} /></Cell>
                          <FolderName $bold>&gt; 光刀</FolderName>
                        </Row>
                        {treeB.map((r, i) => <ItemRow key={i} {...r} />)}
                        <Row $pad={38}><Ic n="folderT" s={16} /><FolderName>光刀清角</FolderName></Row>
                      </Tree>
                      <VScroll><Arrow d="d" /></VScroll>
                    </TreeRow2>
                    <HScroll>
                      <Arrow d="l" />
                      <HThumb $w={358} />
                      <HFill />
                      <Arrow d="r" />
                    </HScroll>
                  </TreePane>
                  <StripGap $w={12} />
                  <Strip $h={385} $w={30}>
                    <StripIcon $mt={0} $ml={1}><Ic n="undoCur" s={24} /></StripIcon>
                    <StripClose $mt={10} $mr={8}><CloseBox>×</CloseBox></StripClose>
                  </Strip>
                  <Strip $h={487} $w={41}>
                    <SideBtn $mt={0}>电</SideBtn>
                    <StripIcon $mt={2} $ml={-6}><Ic n="bikeP" s={22} /></StripIcon>
                    <StripIcon $mt={1} $ml={-6}><Ic n="bikeX" s={24} /></StripIcon>
                    <SideBtn $on $mt={2}>深</SideBtn>
                    <SideBtn $mt={5}>检</SideBtn>
                    <SideBtn $mt={2}>精</SideBtn>
                    <StripClose $mt={9} $mr={19}><CloseBox>×</CloseBox></StripClose>
                  </Strip>
                </DockBody>
              </LeftColumn>
              <ViewWrap><Viewport /></ViewWrap>
            </Work>
            <StatusBar>
              {flow([
                ic(7, 'coord', 20),
                [66.5, 87, <StatusCombo><Chevron /></StatusCombo>],
                ic(127, 'axX'), ic(155, 'axY'), sel(181, 'axZ', 22),
                ic(218, 'grid'),
                [260, 52, <StatusField />],
                [328, 56, <StatusField>-242</StatusField>],
                [388, 56, <StatusField>-106.42</StatusField>],
                [448, 56, <StatusField>142.845</StatusField>],
                ic(492, 'matrix', 22), sel(518, 'link', 22),
                [577.5, 89, <StatusField />],
                ic(650, 'battery', 22), ic(683, 'rulerB', 22),
                [727, 56, <StatusField>毫米</StatusField>],
                ic(771, 'cross', 22),
                [813, 56, <StatusField />],
                ic(855, 'toolB', 22),
                [899, 56, <StatusField />],
                ic(945, 'dia', 22),
                [985, 56, <StatusField>6.0</StatusField>],
                ic(1029, 'tickB', 22),
                [1072, 56, <StatusField>0.0</StatusField>],
              ])}
            </StatusBar>
          </Frame>
          <EdgeStrip />
        </Desk>

        <Watermark>创景教育老杜原创录制</Watermark>
        <WinControls><span>—</span><span>□</span><span>✕</span></WinControls>

        <Dialog>
          <DlgTitle>
            <Ic n="logo" s={16} />
            策略选取器
            <DlgTitleFill />
            <DlgHelp>?</DlgHelp>
            <DlgClose>×</DlgClose>
          </DlgTitle>
          <DlgBody>
            <DlgTools>
              <ToolBtn><Ic n="folder" s={20} /></ToolBtn>
              <ToolBtn><Ic n="plus" s={20} /></ToolBtn>
              <ToolBtn $off><Ic n="cancel" s={20} /></ToolBtn>
            </DlgTools>
            <SearchRow>
              <SearchIconSlot><Ic n="search" s={16} /></SearchIconSlot>
              <SearchInput />
            </SearchRow>
            <div />
            <ListBox>
              <CatItems>
                {cats.map(([icon, label], i) => (
                  <CatItem key={i}>
                    <CatIcon><Ic n={icon} s={24} /></CatIcon>
                    <CatLabel $on={i === 5}>{label}</CatLabel>
                  </CatItem>
                ))}
              </CatItems>
              <VBar>
                <Arrow d="u" />
                <VThumb />
                <VBarFill />
                <VBarEnd><Arrow d="d" /></VBarEnd>
              </VBar>
            </ListBox>
            <MidList>
              <MidItems>
                {mids.map((m, i) => (
                  <MidItem key={i}>
                    <StarSlot><Ic n="star" s={14} /></StarSlot>
                    <Ic n="endMill" s={16} />
                    <MidLabel $on={i === 3}>{m}</MidLabel>
                  </MidItem>
                ))}
              </MidItems>
              <HBar><Arrow d="l" /><HBarThumb /><Arrow d="r" /></HBar>
            </MidList>
            <PreviewBox>
              <PreviewLabel>预览</PreviewLabel>
              <Preview />
            </PreviewBox>
            <DlgFooter>
              <PushBtn>接受</PushBtn>
              <PushBtn>取消</PushBtn>
            </DlgFooter>
          </DlgBody>
          <Grip />
        </Dialog>
        <Cursor viewBox="0 0 13 20">
          <path d="M1 1V16L4.5 13L7 19L10 18L7.5 12H12Z" fill="#fff" fillOpacity=".7" stroke="#666" />
        </Cursor>
      </Page>
    </>
  );
}
